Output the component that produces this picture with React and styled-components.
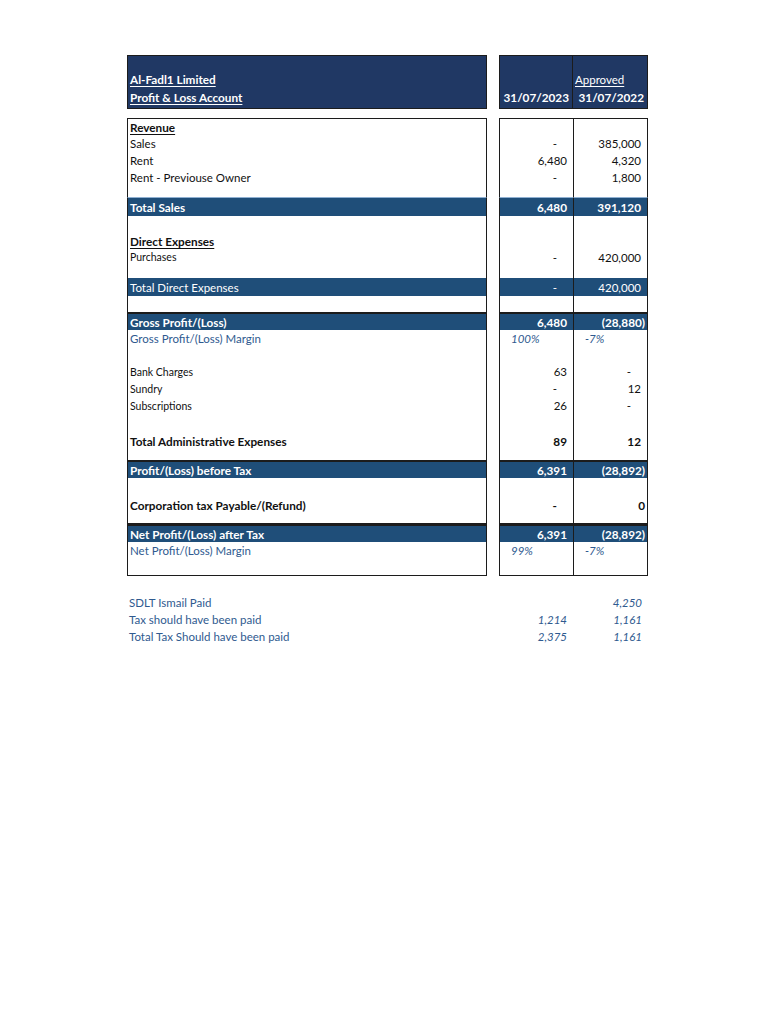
import React from "react";
import styled, { createGlobalStyle } from "styled-components";

const GlobalStyle = createGlobalStyle`
  *, *::before, *::after { box-sizing: border-box; }
  html, body { margin: 0; padding: 0; background: #fff; }
  body {
    font-family: Lato, "Noto Sans", sans-serif;
    font-size: 11.5px;
    color: #111;
  }
`;

const NAVY = "#203864";
const BAND = "#1f4e79";
const BLUE = "#2f5a8f";
const LINE = "#1c1c1c";

const REG = 11.5;
const BOLD = 11.75;

const Page = styled.div`
  width: 768px;
  min-height: 1024px;
  padding: 55px 0 0 127px;
`;

const Sheet = styled.div`
  display: flex;
  flex-direction: column;
  width: 521px;
`;

const Row = styled.div`
  display: grid;
  grid-template-columns: 360px 12px 74px 75px;
  height: ${p => p.$h}px;
`;

const Gap = styled.div``;

const Header = styled(Row)`
  margin-bottom: 9px;
`;

const HeadCell = styled.div`
  background: ${NAVY};
  border: 1px solid ${LINE};
  border-left-width: ${p => (p.$divider ? 0 : 1)}px;
  color: #fff;
  display: flex;
  flex-direction: column;
  justify-content: flex-end;
  align-items: ${p => (p.$right ? "flex-end" : "flex-start")};
  padding: 0 ${p => (p.$right ? 3 : 0)}px 1px ${p => (p.$right ? 0 : 2)}px;
  line-height: 18px;
`;

const HeadText = styled.span`
  font-size: ${p => (p.$bold ? BOLD : REG)}px;
  font-weight: ${p => (p.$bold ? 700 : 400)};
  text-decoration: ${p => (p.$underline ? "underline" : "none")};
  text-underline-offset: 2px;
  align-self: ${p => (p.$left ? "flex-start" : "auto")};
  padding-left: ${p => (p.$left ? 2 : 0)}px;
`;

const Cell = styled.div`
  display: flex;
  align-items: center;
  background: ${p => (p.$band ? BAND : "transparent")};
  border-top: ${p => p.$top}px solid ${p => p.$topColor || LINE};
  border-bottom: ${p => p.$bottom}px solid ${LINE};
  border-left: ${p => (p.$open ? 0 : 1)}px solid ${LINE};
`;

const LabelCell = styled(Cell)`
  border-right: ${p => (p.$open ? 0 : 1)}px solid ${LINE};
  padding-left: 2px;
`;

const MidCell = styled(Cell)`
  justify-content: ${p => (p.$pct ? "flex-start" : "flex-end")};
`;

const EndCell = styled(Cell)`
  border-right: ${p => (p.$open ? 0 : 1)}px solid ${LINE};
  justify-content: ${p => (p.$pct ? "flex-start" : "flex-end")};
`;

const Label = styled.span`
  font-size: ${p => (p.$small ? 10.5 : p.$bold ? BOLD : REG)}px;
  font-weight: ${p => (p.$bold ? 700 : 400)};
  text-decoration: ${p => (p.$underline ? "underline" : "none")};
  text-underline-offset: 2px;
  color: ${p => p.$color};
  white-space: nowrap;
`;

const Value = styled.span`
  font-size: ${p => (p.$bold ? BOLD : REG)}px;
  font-weight: ${p => (p.$bold ? 700 : 400)};
  font-style: ${p => (p.$italic ? "italic" : "normal")};
  color: ${p => p.$color};
  padding-right: ${p => p.$pr}px;
  padding-left: ${p => p.$pl}px;
  white-space: nowrap;
`;

const Notes = styled.div`
  display: flex;
  flex-direction: column;
  margin-top: 18px;
`;

// h is the full row height, borders included
const rows = [
  { h: 17, label: "Revenue", kind: "heading", first: true },
  { h: 17, label: "Sales", a: "-", b: "385,000" },
  { h: 17, label: "Rent", a: "6,480", b: "4,320" },
  { h: 17, label: "Rent - Previouse Owner", a: "-", b: "1,800" },
  { h: 11 },
  { h: 19, label: "Total Sales", a: "6,480", b: "391,120", kind: "band", bold: true, top: 1, topColor: "#8fb0d2" },
  { h: 17 },
  { h: 16, label: "Direct Expenses", kind: "heading" },
  { h: 16, label: "Purchases", a: "-", b: "420,000", small: true },
  { h: 13 },
  { h: 18, label: "Total Direct Expenses", a: "-", b: "420,000", kind: "band" },
  { h: 16 },
  { h: 18, label: "Gross Profit/(Loss)", a: "6,480", b: "(28,880)", kind: "band", bold: true, top: 2 },
  { h: 17, label: "Gross Profit/(Loss) Margin", a: "100%", b: "-7%", kind: "margin" },
  { h: 16 },
  { h: 17, label: "Bank Charges", a: "63", b: "-", small: true },
  { h: 17, label: "Sundry", a: "-", b: "12", small: true },
  { h: 17, label: "Subscriptions", a: "26", b: "-", small: true },
  { h: 18 },
  { h: 18, label: "Total Administrative Expenses", a: "89", b: "12", bold: true },
  { h: 10 },
  { h: 18, label: "Profit/(Loss) before Tax", a: "6,391", b: "(28,892)", kind: "band", bold: true, top: 2 },
  { h: 18 },
  { h: 18, label: "Corporation tax Payable/(Refund)", a: "-", b: "0", bold: true },
  { h: 9 },
  { h: 19, label: "Net Profit/(Loss) after Tax", a: "6,391", b: "(28,892)", kind: "band", bold: true, top: 3 },
  { h: 16, label: "Net Profit/(Loss) Margin", a: "99%", b: "-7%", kind: "margin" },
  { h: 18, last: true },
];

const notes = [
  { label: "SDLT Ismail Paid", a: "", b: "4,250" },
  { label: "Tax should have been paid", a: "1,214", b: "1,161" },
  { label: "Total Tax Should have been paid", a: "2,375", b: "1,161" },
];

// accounting format: dashes and brackets sit at different offsets
function pad(v) {
  if (v === "-") return 16;
  if (v.startsWith("(")) return 2;
  if (v === "0") return 2;
  return 6;
}

function SheetRow({ r }) {
  const band = r.kind === "band";
  const pct = r.kind === "margin";
  const top = r.first ? 1 : r.top || 0;
  const bottom = r.last ? 1 : 0;
  const textColor = band ? "#fff" : pct ? BLUE : "#111";
  const val = v =>
    v ? (
      <Value
        $bold={r.bold}
        $italic={pct}
        $color={textColor}
        $pr={pct ? 0 : pad(v)}
        $pl={pct ? 11 : 0}
      >
        {v}
      </Value>
    ) : null;

  return (
    <Row $h={r.h}>
      <LabelCell $band={band} $top={top} $topColor={r.topColor} $bottom={bottom}>
        {r.label && (
          <Label
            $bold={r.bold || r.kind === "heading"}
            $underline={r.kind === "heading"}
            $small={r.small}
            $color={textColor}
          >
            {r.label}
          </Label>
        )}
      </LabelCell>
      <Gap />
      <MidCell $band={band} $pct={pct} $top={top} $topColor={r.topColor} $bottom={bottom}>
        {val(r.a)}
      </MidCell>
      <EndCell $band={band} $pct={pct} $top={top} $topColor={r.topColor} $bottom={bottom}>
        {val(r.b)}
      </EndCell>
    </Row>
  );
}

export default function App() {
  return (
    <Page>
      <GlobalStyle />
      <Sheet>
        <Header $h={54}>
          <HeadCell>
            <HeadText $bold $underline>Al-Fadl1 Limited</HeadText>
            <HeadText $bold $underline>Profit &amp; Loss Account</HeadText>
          </HeadCell>
          <Gap />
          <HeadCell $right>
            <HeadText $bold>31/07/2023</HeadText>
          </HeadCell>
          <HeadCell $right $divider>
            <HeadText $underline $left>Approved</HeadText>
            <HeadText $bold>31/07/2022</HeadText>
          </HeadCell>
        </Header>

        {rows.map((r, i) => (
          <SheetRow key={i} r={r} />
        ))}

        <Notes>
          {notes.map(n => (
            <Row $h={17} key={n.label}>
              <LabelCell $open $top={0} $bottom={0}>
                <Label $color={BLUE}>{n.label}</Label>
              </LabelCell>
              <Gap />
              <MidCell $open $top={0} $bottom={0}>
                {n.a && <Value $italic $color={BLUE} $pr={6} $pl={0}>{n.a}</Value>}
              </MidCell>
              <EndCell $open $top={0} $bottom={0}>
                <Value $italic $color={BLUE} $pr={6} $pl={0}>{n.b}</Value>
              </EndCell>
            </Row>
          ))}
        </Notes>
      </Sheet>
    </Page>
  );
}
